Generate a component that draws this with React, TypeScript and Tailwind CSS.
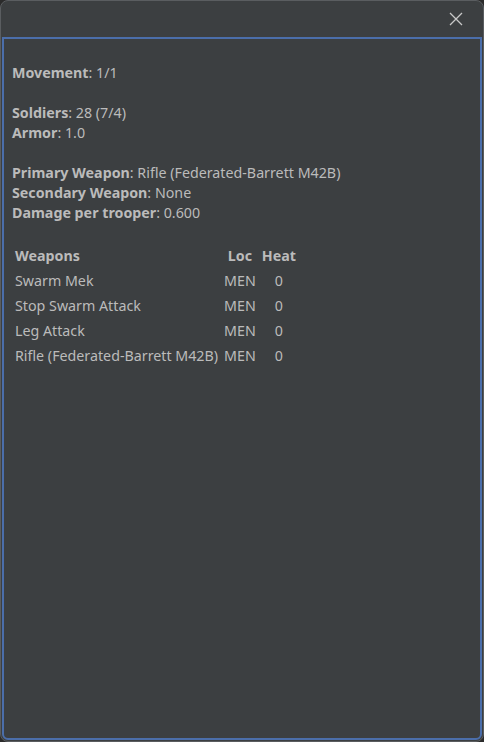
export default function App() {
  const weapons = [
    { name: 'Swarm Mek', loc: 'MEN', heat: '0' },
    { name: 'Stop Swarm Attack', loc: 'MEN', heat: '0' },
    { name: 'Leg Attack', loc: 'MEN', heat: '0' },
    { name: 'Rifle (Federated-Barrett M42B)', loc: 'MEN', heat: '0' },
  ];

  return (
    <div className="w-[484px] h-[742px] bg-[#2b2b2b] font-['Noto_Sans',sans-serif]">
      <div className="flex flex-col w-full h-full bg-[#3c3f41] border border-[#5a5d60] rounded-lg overflow-hidden">
        <div className="flex justify-end items-center h-[36px] pr-[20px] shrink-0">
          <svg width="14" height="14" viewBox="0 0 14 14" className="text-[#c8c8c8]">
            <path d="M1 1L13 13M13 1L1 13" stroke="currentColor" strokeWidth="1.3" />
          </svg>
        </div>
        <div className="flex-1 mx-px mb-px border-2 border-[#4b6eaa] rounded-b-md px-[8px] pt-[24px] text-[14.25px] leading-[20px] text-[#bbbbbb]">
          <div>
            <b>Movement</b>: 1/1
          </div>
          <div className="h-[20px]" />
          <div>
            <b>Soldiers</b>: 28 (7/4)
          </div>
          <div>
            <b>Armor</b>: 1.0
          </div>
          <div className="h-[20px]" />
          <div>
            <b>Primary Weapon</b>: Rifle (Federated-Barrett M42B)
          </div>
          <div>
            <b>Secondary Weapon</b>: None
          </div>
          <div>
            <b>Damage per trooper</b>: 0.600
          </div>
          <table className="mt-[20px] border-collapse">
            <thead>
              <tr className="h-[25px]">
                <th className="text-left font-bold px-[3px]">Weapons</th>
                <th className="font-bold px-[3px]">Loc</th>
                <th className="font-bold px-[3px]">Heat</th>
              </tr>
            </thead>
            <tbody>
              {weapons.map((w) => (
                <tr key={w.name} className="h-[25px]">
                  <td className="text-left px-[3px] whitespace-nowrap">{w.name}</td>
                  <td className="text-center px-[3px]">{w.loc}</td>
                  <td className="text-center px-[3px]">{w.heat}</td>
                </tr>
              ))}
            </tbody>
          </table>
        </div>
      </div>
    </div>
  );
}
